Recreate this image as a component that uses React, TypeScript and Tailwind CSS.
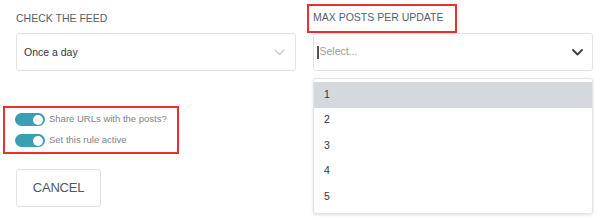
import React from 'react';

const OPTIONS = ['1', '2', '3', '4', '5'];

function Chevron({ dark }: { dark?: boolean }) {
  return (
    <svg width="11" height="7" viewBox="0 0 11 7" fill="none">
      <path
        d="M1 1l4.5 4.5L10 1"
        stroke={dark ? '#3d3d3d' : '#c4c8cb'}
        strokeWidth={dark ? 1.8 : 1.2}
        strokeLinecap="round"
        strokeLinejoin="round"
      />
    </svg>
  );
}

function Toggle({ label }: { label: string }) {
  return (
    <div className="flex items-center gap-[4px] h-[21px]">
      <div className="w-[30px] h-[13px] rounded-full bg-[#3a9fb3] flex items-center justify-end pr-[2px]">
        <div className="w-[10px] h-[10px] rounded-full bg-white" />
      </div>
      <span className="text-[9.5px] text-[#7b848b]">{label}</span>
    </div>
  );
}

export default function App() {
  return (
    <div
      className="relative w-[600px] h-[220px] bg-white overflow-hidden"
      style={{ fontFamily: '"Liberation Sans", Arial, sans-serif' }}
    >
      <div className="flex gap-[17px] pl-[16px] pr-[7px] pt-[4px]">
        {/* Left column */}
        <div className="w-[280px] flex flex-col">
          <div className="h-[29px] flex items-end pb-[6px]">
            <span className="text-[10.5px] font-medium text-[#53616c] uppercase">Check the feed</span>
          </div>
          <div className="h-[38px] border border-[#dfe3e6] rounded-[3px] flex items-center justify-between pl-[7px] pr-[10px]">
            <span className="text-[10.5px] text-[#333] mt-[2px]">Once a day</span>
            <Chevron />
          </div>

          <div className="mt-[35px] -ml-[13px] w-[176px] border-2 border-[#e8312f] pl-[10px] py-[1px]">
            <Toggle label="Share URLs with the posts?" />
            <Toggle label="Set this rule active" />
          </div>

          <button className="mt-[15px] w-[85px] h-[38px] border border-[#dde2e5] rounded-[3px] bg-white text-[13px] text-[#4b5a65] tracking-[-0.2px]">
            CANCEL
          </button>
        </div>

        {/* Right column */}
        <div className="w-[280px] flex flex-col relative">
          <div className="h-[29px] flex items-end">
            <div className="-ml-[6px] border-2 border-[#e8312f] h-[29px] w-[150px] flex items-end pl-[4px] pb-[5px]">
              <span className="text-[10.5px] font-medium text-[#53616c] uppercase">Max posts per update</span>
            </div>
          </div>
          <div className="h-[38px] border border-[#dfe3e6] rounded-[3px] flex items-center justify-between pl-[3px] pr-[9px]">
            <div className="flex items-center gap-[1px]">
              <div className="w-[1.5px] h-[13px] bg-[#555]" />
              <span className="text-[10.5px] text-[#9b9b9b]">Select...</span>
            </div>
            <Chevron dark />
          </div>

          {/* Open menu */}
          <div className="absolute top-[74px] left-0 w-[280px] border border-[#e2e5e8] rounded-[3px] bg-white shadow-[0_1px_3px_rgba(0,0,0,0.12)] py-[3px]">
            {OPTIONS.map((o, i) => (
              <div
                key={o}
                className={`h-[25.5px] flex items-center pl-[10px] text-[10.5px] text-[#333] ${i === 0 ? 'bg-[#d4d9dd]' : ''}`}
              >
                {o}
              </div>
            ))}
          </div>
        </div>
      </div>
    </div>
  );
}
